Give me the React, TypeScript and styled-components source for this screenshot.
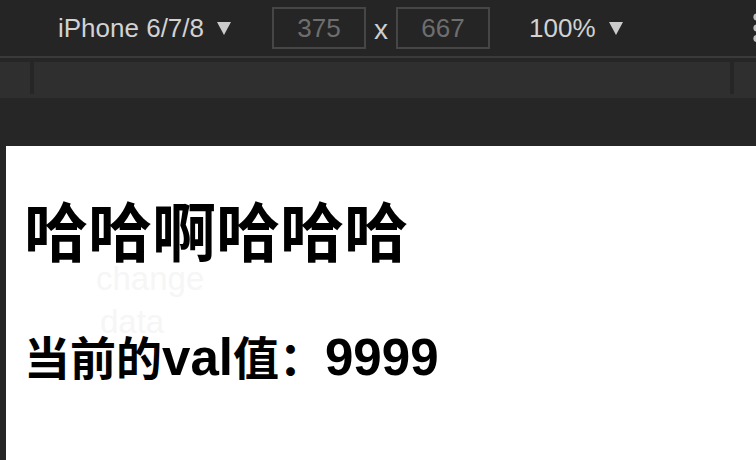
import React from 'react'
import styled, { createGlobalStyle } from 'styled-components'

const GlobalStyle = createGlobalStyle`
  html, body {
    margin: 0;
    padding: 0;
    height: 100%;
    overflow: hidden;
    background: #262626;
  }
  #root {
    height: 100%;
  }
`

const Shell = styled.div`
  display: flex;
  flex-direction: column;
  height: 100%;
  font-family: "Liberation Sans", Arial, sans-serif;
`

const Toolbar = styled.div`
  display: flex;
  align-items: center;
  height: 56px;
  padding-left: 58px;
  background: #252525;
  border-bottom: 2px solid #3a3a3a;
  flex-shrink: 0;
`

const Select = styled.div<{ $offset?: number }>`
  display: flex;
  align-items: center;
  gap: 13px;
  margin-left: ${p => p.$offset ?? 0}px;
  font-size: 26px;
  color: #d2d2d2;
  white-space: nowrap;
`

const Caret = styled.span`
  width: 0;
  height: 0;
  border-left: 7px solid transparent;
  border-right: 7px solid transparent;
  border-top: 13px solid #cccccc;
  margin-top: 1px;
`

const Dims = styled.div`
  display: flex;
  align-items: center;
  margin-left: 41px;
`

const DimBox = styled.div`
  width: 94px;
  height: 42px;
  box-sizing: border-box;
  border: 2px solid #464646;
  display: flex;
  align-items: center;
  justify-content: center;
  font-size: 26px;
  color: #6e6e6e;
`

const Times = styled.span`
  width: 30px;
  text-align: center;
  font-size: 28px;
  color: #cfcfcf;
  margin-top: 4px;
`

const Kebab = styled.svg`
  margin-left: auto;
  margin-right: -5px;
  flex-shrink: 0;
`

const RulerBar = styled.div`
  display: flex;
  justify-content: space-between;
  height: 36px;
  margin-top: 4px;
  padding: 0 22px 0 30px;
  background: #2f2f2f;
  flex-shrink: 0;
`

const Divider = styled.div`
  width: 4px;
  height: 32px;
  background: #262626;
`

const Page = styled.div`
  position: relative;
  flex: 1;
  margin: 48px 0 0 6px;
  padding: 50px 18px 0;
  background: #ffffff;
  color: #000000;
  font-family: "Noto Sans CJK SC", "Liberation Sans", sans-serif;
`

const Title = styled.h1`
  margin: 0;
  font-size: 64px;
  font-weight: 700;
  line-height: 1;
  position: relative;
`

const Value = styled.p`
  margin: 72px 0 0;
  font-size: 46px;
  font-weight: 700;
  line-height: 1;
  position: relative;
  white-space: nowrap;
`

const Latin = styled.span`
  font-family: "Liberation Sans", Arial, sans-serif;
  font-size: 1.11em;
`

const Ghost = styled.div`
  position: absolute;
  left: 90px;
  top: 111px;
  font-family: "Liberation Sans", Arial, sans-serif;
  font-size: 33px;
  line-height: 43px;
  color: #f6f6f6;
`

const GhostLine = styled.div<{ $indent?: number }>`
  padding-left: ${p => p.$indent ?? 0}px;
`

export default function App() {
  return (
    <>
      <GlobalStyle />
      <Shell>
        <Toolbar>
          <Select>
            iPhone 6/7/8
            <Caret />
          </Select>
          <Dims>
            <DimBox>375</DimBox>
            <Times>x</Times>
            <DimBox>667</DimBox>
          </Dims>
          <Select $offset={39}>
            100%
            <Caret />
          </Select>
          <Kebab width="8" height="40" viewBox="0 0 8 40">
            <circle cx="4" cy="9" r="3.6" fill="#bdbdbd" />
            <circle cx="4" cy="20" r="3.6" fill="#bdbdbd" />
            <circle cx="4" cy="30.5" r="3.6" fill="#bdbdbd" />
          </Kebab>
        </Toolbar>
        <RulerBar>
          <Divider />
          <Divider />
        </RulerBar>
        <Page>
          <Ghost>
            <GhostLine>change</GhostLine>
            <GhostLine $indent={4}>data</GhostLine>
          </Ghost>
          <Title>哈哈啊哈哈哈</Title>
          <Value>
            当前的<Latin>val</Latin>值：<Latin>9999</Latin>
          </Value>
        </Page>
      </Shell>
    </>
  )
}
